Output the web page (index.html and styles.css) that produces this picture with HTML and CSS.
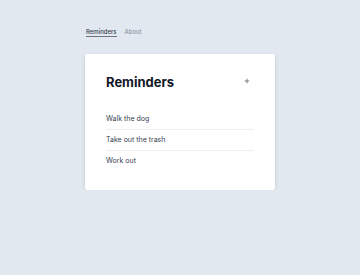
FILE: index.html
```html
<!DOCTYPE html>
<html lang="en">
<head>
<meta charset="utf-8">
<title>Reminders</title>
<link rel="stylesheet" href="styles.css">
</head>
<body>
<div class="page">
  <nav class="tabs">
    <a class="tab active">Reminders</a>
    <a class="tab">About</a>
  </nav>
  <section class="card">
    <header class="card-head">
      <h1 class="title">Reminders</h1>
      <button class="add" aria-label="Add reminder">
        <svg width="6" height="6" viewBox="0 0 6 6"><path d="M3 0.6V5.4M0.6 3H5.4" stroke="#4b5563" stroke-width="0.7" fill="none"/></svg>
      </button>
    </header>
    <ul class="list">
      <li class="item">Walk the dog</li>
      <li class="item">Take out the trash</li>
      <li class="item">Work out</li>
    </ul>
  </section>
</div>
</body>
</html>
```
FILE: styles.css
```css
html, body {
  margin: 0;
  padding: 0;
}
body {
  background: #e2e8f0;
  font-family: Inter, "Noto Sans", sans-serif;
  color: #374151;
}
.page {
  width: 190px;
  margin: 0 auto;
  padding-top: 28px;
}
.tabs {
  display: flex;
  gap: 8px;
  padding-left: 1px;
}
.tab {
  font-size: 6px;
  line-height: 8px;
  font-weight: 400;
  color: #7d8594;
  border-bottom: 1px solid transparent;
}
.tab.active {
  font-weight: 500;
  color: #374151;
  border-bottom-color: #6b7280;
}
.card {
  margin-top: 17px;
  background: #ffffff;
  border-radius: 2px;
  box-shadow: 0 1px 3px rgba(15, 23, 42, 0.10), 0 2px 5px rgba(15, 23, 42, 0.06);
  padding: 20px 21px 19px;
}
.card-head {
  display: flex;
  justify-content: space-between;
  align-items: center;
}
.title {
  margin: 0;
  font-size: 13px;
  line-height: 16px;
  font-weight: 700;
  color: #111827;
}
.add {
  width: 14px;
  height: 14px;
  padding: 0;
  border: 0;
  background: transparent;
  display: flex;
  align-items: center;
  justify-content: center;
  margin-top: -2px;
}
.list {
  list-style: none;
  margin: 19px 0 0;
  padding: 0;
}
.item {
  font-size: 7px;
  line-height: 10px;
  padding: 5px 0;
  color: #374151;
  border-bottom: 1px solid #eef0f3;
}
.item:last-child {
  border-bottom: 0;
}
```
